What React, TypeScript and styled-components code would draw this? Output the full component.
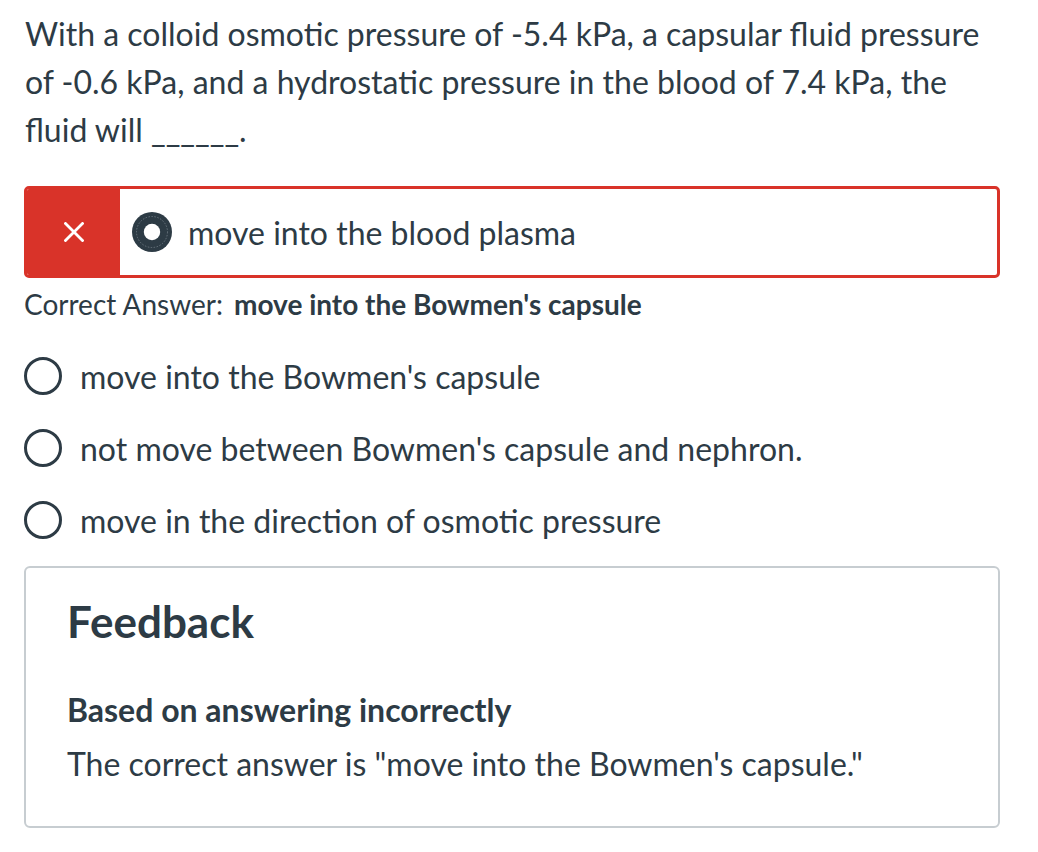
import React from "react";
import styled, { createGlobalStyle } from "styled-components";

const Global = createGlobalStyle`
  html, body { margin: 0; padding: 0; background: #ffffff; }
  body { font-family: Lato, "Noto Sans", sans-serif; color: #2d3b45; }
`;

const Page = styled.div`
  width: 976px;
  padding: 10px 38px 0 24px;
`;

const Question = styled.p`
  margin: 0 0 32px 1px;
  font-size: 32px;
  line-height: 48px;
`;

const AnswerBox = styled.div`
  display: flex;
  height: 92px;
  box-sizing: border-box;
  border: 3px solid #d93329;
  border-radius: 5px;
  overflow: hidden;
`;

const WrongMark = styled.div`
  width: 93px;
  background: #d93329;
  display: flex;
  align-items: center;
  justify-content: center;
`;

const AnswerBody = styled.div`
  flex: 1;
  display: flex;
  align-items: center;
  gap: 16px;
  padding-left: 12px;
  font-size: 32px;
`;

const CorrectLine = styled.div`
  margin-top: 8px;
  font-size: 28px;
  line-height: 36px;
`;

const CorrectValue = styled.strong`
  font-weight: 700;
  margin-left: 11px;
`;

const Options = styled.ul`
  list-style: none;
  margin: 34px 0 0 0;
  padding: 0;
  display: flex;
  flex-direction: column;
  gap: 32px;
`;

const Option = styled.li`
  display: flex;
  align-items: center;
  gap: 18px;
  height: 40px;
  font-size: 32px;
`;

const Radio = styled.span`
  width: 38px;
  height: 38px;
  box-sizing: border-box;
  border: 3.5px solid #2d3b45;
  border-radius: 50%;
  flex: none;
`;

const Feedback = styled.section`
  margin-top: 26px;
  border: 2px solid #c7cdd1;
  border-radius: 6px;
  height: 262px;
  box-sizing: border-box;
  padding: 26px 41px;
`;

const FeedbackTitle = styled.h2`
  margin: 0;
  font-size: 44px;
  font-weight: 700;
  line-height: 54px;
`;

const FeedbackSub = styled.h3`
  margin: 38px 0 0 0;
  font-size: 32px;
  font-weight: 700;
  line-height: 48px;
`;

const FeedbackText = styled.p`
  margin: 6px 0 0 0;
  font-size: 32px;
  line-height: 48px;
`;

const XIcon = () => (
  <svg width="20" height="20" viewBox="0 0 20 20">
    <path d="M1.5 1.5 L18.5 18.5 M18.5 1.5 L1.5 18.5" stroke="#ffffff" strokeWidth="2.8" strokeLinecap="square" />
  </svg>
);

const FilledRadio = () => (
  <svg width="40" height="40" viewBox="0 0 40 40" style={{ flex: "none" }}>
    <circle cx="20" cy="20" r="20" fill="#2d3b45" />
    <circle cx="20" cy="20" r="15.5" fill="none" stroke="#7d8890" strokeWidth="0.7" strokeDasharray="1.5 1.5" />
    <circle cx="20" cy="20" r="8.2" fill="#ffffff" />
  </svg>
);

const options = [
  "move into the Bowmen's capsule",
  "not move between Bowmen's capsule and nephron.",
  "move in the direction of osmotic pressure",
];

export default function App() {
  return (
    <>
      <Global />
      <Page>
        <Question>
          With a colloid osmotic pressure of -5.4 kPa, a capsular fluid pressure of -0.6 kPa, and a
          hydrostatic pressure in the blood of 7.4 kPa, the fluid will ______.
        </Question>
        <AnswerBox>
          <WrongMark>
            <XIcon />
          </WrongMark>
          <AnswerBody>
            <FilledRadio />
            <span>move into the blood plasma</span>
          </AnswerBody>
        </AnswerBox>
        <CorrectLine>
          Correct Answer:<CorrectValue>move into the Bowmen's capsule</CorrectValue>
        </CorrectLine>
        <Options>
          {options.map((o) => (
            <Option key={o}>
              <Radio />
              <span>{o}</span>
            </Option>
          ))}
        </Options>
        <Feedback>
          <FeedbackTitle>Feedback</FeedbackTitle>
          <FeedbackSub>Based on answering incorrectly</FeedbackSub>
          <FeedbackText>The correct answer is "move into the Bowmen's capsule."</FeedbackText>
        </Feedback>
      </Page>
    </>
  );
}
